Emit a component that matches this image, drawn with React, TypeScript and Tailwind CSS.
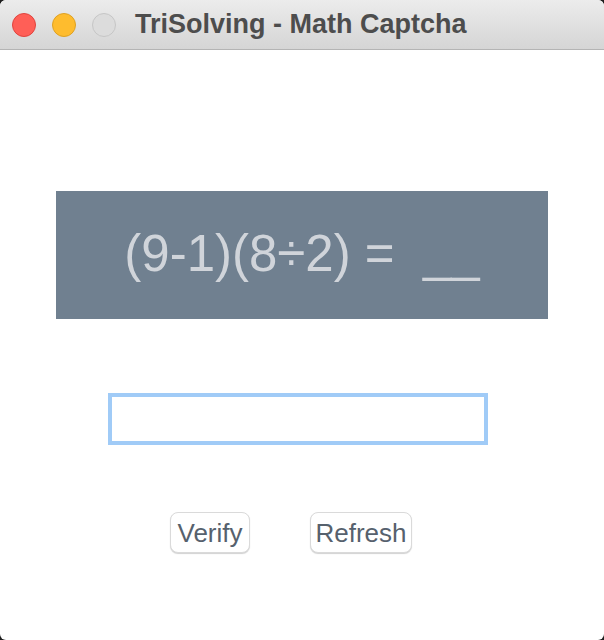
import React from "react";

function TrafficLights() {
  return (
    <div className="flex items-center gap-4">
      <span className="h-6 w-6 rounded-full border border-[#e0443e] bg-[#ff5f57]" />
      <span className="h-6 w-6 rounded-full border border-[#dea123] bg-[#febc2e]" />
      <span className="h-6 w-6 rounded-full border border-[#c6c6c6] bg-[#dcdcdc]" />
    </div>
  );
}

function PushButton({ label, width }: { label: string; width: string }) {
  return (
    <button
      type="button"
      className={`${width} flex h-[41px] items-center justify-center rounded-lg border border-[#dadada] bg-white text-[26px] leading-none text-[#56616d] shadow-[0_1px_1px_rgba(0,0,0,0.18)]`}
    >
      {label}
    </button>
  );
}

export default function App() {
  return (
    <div className="h-[640px] w-[604px] bg-[#1e1e1e]">
      <div
        className="flex h-full w-full flex-col overflow-hidden rounded-[6px] bg-white"
        style={{ fontFamily: '"Liberation Sans", Arial, sans-serif' }}
      >
        <div className="flex h-[50px] shrink-0 items-center border-b border-[#b4b4b4] bg-gradient-to-b from-[#ececec] to-[#d5d5d5] pl-3">
          <TrafficLights />
          <span className="ml-[19px] text-[27px] leading-none font-bold text-[#4d4d4d]">
            TriSolving - Math Captcha
          </span>
        </div>

        <div className="mx-[56px] mt-[141px] flex h-[128px] items-center justify-center bg-[#708090] pb-1">
          <span className="text-[51px] leading-none text-[#d0d4da]">
            (9-1)(8÷2) =&nbsp; __
          </span>
        </div>

        <div className="ml-[108px] mt-[74px] h-[52px] w-[380px] border-4 border-[#a0cbf7] bg-white shadow-[inset_0_-1px_0_#8ab8ec]">
          <input
            type="text"
            className="h-full w-full bg-white px-2 text-[22px] outline-none"
          />
        </div>

        <div className="mt-[67px] flex gap-[60px] pl-[170px]">
          <PushButton label="Verify" width="w-[80px]" />
          <PushButton label="Refresh" width="w-[102px]" />
        </div>
      </div>
    </div>
  );
}
